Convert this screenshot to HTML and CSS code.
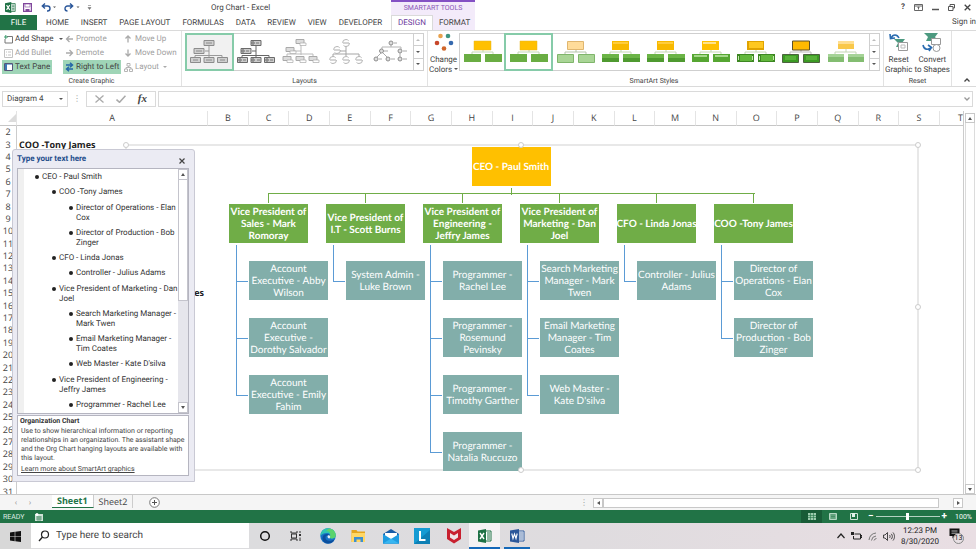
FILE: index.html
```html
<!DOCTYPE html>
<html lang="en">
<head>
<meta charset="utf-8">
<title>Org Chart - Excel</title>
<link rel="stylesheet" href="styles.css">
</head>
<body>
<svg class="defs" width="0" height="0" aria-hidden="true">
  <defs>
    <symbol id="excel" viewBox="0 0 14 14"><path d="M7 2h6v10H7z" fill="#fff" stroke="#217346"/><path d="M9 4h3M9 6h3M9 8h3M9 10h3" stroke="#217346"/><path d="M0 1.500 8 0v14L0 12.500z" fill="#1e7145"/><path d="m2 4 4 6M6 4l-4 6" stroke="#fff" stroke-width="1.400"/></symbol>
    <symbol id="s-flat" viewBox="0 0 40 24"><path d="M9 14v-2h21v2M20 9v3" fill="none" stroke="#c4d6b4"/><path d="M11 1h17v9H11z" fill="#ffc000" stroke="#e6b422" stroke-width=".5"/><path d="M1 14h17v8H1zM22 14h17v8H22z" fill="#6aad43"/></symbol>
    <symbol id="s-pale" viewBox="0 0 40 24"><path d="M9 14v-2h21v2M20 9v3" fill="none" stroke="#b5c4ab"/><path d="M11.500 1.500h16v8h-16z" fill="#ffdc9a" stroke="#e0b66f"/><path d="M1.500 14.500h16v8h-16zM22.500 14.500h16v8h-16z" fill="#a9d596" stroke="#7fb56b"/></symbol>
    <symbol id="s-grad" viewBox="0 0 40 24"><path d="M9 14v-2h21v2M20 9v3" fill="none" stroke="#c4d6b4"/><path d="M11 1h17v9H11z" fill="#f8b900"/><path d="M12 2h15v2H12z" fill="#ffcd3c"/><path d="M1 14h17v8H1zM22 14h17v8H22z" fill="#4f9a30"/><path d="M1 14h17v4H1zM22 14h17v4H22z" fill="#6bb446"/></symbol>
    <symbol id="s-gloss" viewBox="0 0 40 24"><path d="M9 14v-2h21v2M20 9v3" fill="none" stroke="#c4d6b4"/><path d="M11 1h17v9H11z" fill="#ffc000"/><path d="M12 2h13v2H12z" fill="#ffe38a"/><path d="M1 14h17v8H1zM22 14h17v8H22z" fill="#56a632"/><path d="M3 15h13v2H3zM24 15h13v2H24z" fill="#a5d88b"/></symbol>
    <symbol id="s-inset" viewBox="0 0 40 24"><path d="M9 14v-2h21v2M20 9v3" fill="none" stroke="#c4d6b4"/><path d="M11 1h17v9H11z" fill="#e0a300"/><path d="M13 2h14v6H13z" fill="#ffc81f"/><path d="M1 14h17v8H1zM22 14h17v8H22z" fill="#3d8722"/><path d="M4 15h12v6H4zM25 15h12v6H25z" fill="#62b73c"/><path d="M2 16h1v4H2zM16 16h1v4h-1zM23 16h1v4h-1zM37 16h1v4h-1z" fill="#c5eaae"/></symbol>
    <symbol id="s-frame" viewBox="0 0 40 24"><path d="M9 14v-2h21v2M20 9v3" fill="none" stroke="#bbb"/><path d="M11.500 1h17v9h-17z" fill="#ffb900" stroke="#5e5128"/><path d="M1.500 14.500h16v8h-16zM22.500 14.500h16v8h-16z" fill="#3c9b24" stroke="#4d6340"/><path d="M4 16h11v4H4zM25 16h11v4H25z" fill="#58b13a"/></symbol>
    <symbol id="s-soft" viewBox="0 0 40 24"><path d="M9 14v-2h21v2M20 9v3" fill="none" stroke="#c4d6b4"/><path d="M12 1h16v8H12z" fill="#f9c84a"/><path d="M12 1h16v3H12z" fill="#ffdf91"/><path d="M2 14h16v8H2zM22 14h16v8H22z" fill="#83bd71"/><path d="M2 14h16v3H2zM22 14h16v3H22z" fill="#a5d397"/></symbol>
  </defs>
</svg>

<header class="top">
  <div class="top-left">
    <div class="titlebar">
      <svg width="11" height="11"><use href="#excel"/></svg>
      <button aria-label="Save"><svg width="9" height="9" viewBox="0 0 9 9"><path d="M.6.600h7.800v7.800H.6z" fill="#fff" stroke="#80479c" stroke-width="1.200"/><path d="M2 1h5v3H2z" fill="#fff" stroke="#80479c" stroke-width=".6"/><path d="M2.500 6h4v2.500h-4z" fill="#80479c"/></svg></button>
      <button class="undo" aria-label="Undo"><svg width="16" height="9" viewBox="0 0 16 9"><path d="M1.500 3h5a2.500 2.500 0 0 1 0 5H6M4 .5 1.300 3 4 5.500" fill="none" stroke="#2b579a" stroke-width="1.400"/><path d="M12 3.500h3l-1.500 1.500z" fill="#555"/></svg></button>
      <button aria-label="Redo"><svg width="16" height="9" viewBox="0 0 16 9"><path d="M8 3H3.500a2.500 2.500 0 0 0 0 5M6 .5 8.700 3 6 5.500" fill="none" stroke="#2b579a" stroke-width="1.400"/><path d="M12.500 3.500h3l-1.500 1.500z" fill="#555"/></svg></button>
      <button aria-label="Customize toolbar"><svg width="5" height="7" viewBox="0 0 5 7"><path d="M1 1.500h3M1 3.500h3l-1.500 2z" fill="#777" stroke="#777" stroke-width=".6"/></svg></button>
      <span class="title">Org Chart - Excel</span>
    </div>
    <nav class="tabs main-tabs">
      <a class="file" href="#">FILE</a><a href="#">HOME</a><a href="#">INSERT</a><a href="#">PAGE LAYOUT</a><a href="#">FORMULAS</a><a href="#">DATA</a><a href="#">REVIEW</a><a href="#">VIEW</a><a href="#">DEVELOPER</a>
    </nav>
  </div>
  <div class="context">
    <div class="context-title">SMARTART TOOLS</div>
    <nav class="tabs"><a class="active" href="#">DESIGN</a><a href="#">FORMAT</a></nav>
  </div>
  <div class="top-right">
    <div class="winctl">
      <button class="help" aria-label="Help">?</button>
      <button aria-label="Ribbon options"><svg width="9" height="7" viewBox="0 0 9 7"><path d="M.5.500h8v6h-8zM1 2h7" fill="none" stroke="#666"/><path d="M4.500 2.500 6 4H5v1.500H4V4H3z" fill="#666"/></svg></button>
      <button aria-label="Minimize"><svg width="7" height="7" viewBox="0 0 7 7"><path d="M0 5.500h7" stroke="#555" stroke-width="1.500"/></svg></button>
      <button aria-label="Restore"><svg width="7" height="7" viewBox="0 0 7 7"><path d="M2 2V.5h4.500V4H5M.5 2.500H5v4H.5z" fill="none" stroke="#555"/></svg></button>
      <button aria-label="Close"><svg width="7" height="7" viewBox="0 0 7 7"><path d="m.7.700 5.600 5.600M6.300.7.700 6.300" stroke="#444" stroke-width="1.300"/></svg></button>
    </div>
    <a class="signin" href="#">Sign in</a>
  </div>
</header>

<section class="ribbon">
  <div class="group create">
    <div class="cmds">
      <div class="col">
        <button><svg width="9" height="9" viewBox="0 0 9 9"><path d="M3 1.500h5.500v6.500H1V4" fill="none" stroke="#777"/><path d="M1.800 0v4M0 2h4" stroke="#3a9a6c"/></svg>Add Shape<i class="caret"></i></button>
        <button class="off"><svg width="9" height="9" viewBox="0 0 9 9"><path d="M.5.500h8v8h-8zM2 3h1M4 3h3M2 6h1M4 6h3" fill="none" stroke="#c2c2c2"/></svg>Add Bullet</button>
        <button class="on"><svg width="9" height="8" viewBox="0 0 9 8"><path d="M.5.500h8v7h-8z" fill="#fff" stroke="#557"/><path d="M1 1h2v6H1z" fill="#3b78b5"/><path d="M3 1h5v1H3z" fill="#8db4d8"/></svg>Text Pane</button>
      </div>
      <div class="col">
        <button class="off"><svg width="9" height="8" viewBox="0 0 9 8"><path d="M8 4H1.500M4.500 1l-3 3 3 3" fill="none" stroke="#aaa" stroke-width="1.300"/></svg>Promote</button>
        <button class="off"><svg width="9" height="8" viewBox="0 0 9 8"><path d="M1 4h6.500M4.500 1l3 3-3 3" fill="none" stroke="#aaa" stroke-width="1.300"/></svg>Demote</button>
        <button class="on"><svg width="9" height="10" viewBox="0 0 9 10"><path d="M1 3h6M5 .7 7.500 3 5 5.300M8 7H2M4 4.700 1.500 7 4 9.300" fill="none" stroke="#2567a8" stroke-width="1.500"/></svg>Right to Left</button>
      </div>
      <div class="col">
        <button class="off"><svg width="9" height="8" viewBox="0 0 9 8"><path d="M4 7.500V1M1.500 3.500 4 1l2.500 2.500" fill="none" stroke="#aaa" stroke-width="1.300"/></svg>Move Up</button>
        <button class="off"><svg width="9" height="8" viewBox="0 0 9 8"><path d="M4 .5V7M1.500 4.500 4 7l2.500-2.500" fill="none" stroke="#aaa" stroke-width="1.300"/></svg>Move Down</button>
        <button class="off"><svg width="9" height="9" viewBox="0 0 9 9"><path d="M3 .5h3v2.500H3zM.5 6h3v2.500h-3zM5.500 6h3v2.500h-3zM4.500 3v1.500M2 6V4.500h5V6" fill="none" stroke="#b5b5b5"/></svg>Layout<i class="caret"></i></button>
      </div>
    </div>
    <div class="label">Create Graphic</div>
  </div>

  <div class="group layouts">
    <div class="gallery">
      <button class="item sel" aria-label="Organization Chart"><svg width="38" height="26" viewBox="0 0 38 26"><path d="M19 7v12M15 12h4M5 19v-2.500h27V19" fill="none" stroke="#999"/><path d="M14 1.500h10v5H14zM4 9.500h10v5H4zM.5 18.500h10v5H.5zM14 18.500h10v5H14zM27.500 18.500h10v5h-10z" fill="#cfcfcf" stroke="#8c8c8c"/><path d="M16 4h6M6 12h6M3 21h5M16 21h6M30 21h5" stroke="#8c8c8c"/></svg></button>
      <button class="item" aria-label="Picture Organization Chart"><svg width="38" height="26" viewBox="0 0 38 26"><path d="M19 7v12M15 12h4M5 19v-2.500h27V19" fill="none" stroke="#666"/><path d="M14 1.500h10v5H14zM4 9.500h10v5H4zM.5 18.500h10v5H.5zM14 18.500h10v5H14zM27.500 18.500h10v5h-10z" fill="#ccc" stroke="#6b6b6b"/><path d="M15 3h2v2h-2zM5 11h2v2H5zM2 20h2v2H2zM15 20h2v2h-2zM29 20h2v2h-2z" fill="#fff" stroke="#666"/><path d="M19 4h3M9 12h3M6 21h3M20 21h3M33 21h3" stroke="#777"/></svg></button>
      <button class="item" aria-label="Name and Title"><svg width="38" height="26" viewBox="0 0 38 26"><path d="M19 6v10M10 12h9M5 17v-2h26v2" fill="none" stroke="#bbb"/><path d="M14 .5h8v4h-8zM4 8.500h8v4H4zM1 17.500h8v4H1zM14 17.500h8v4h-8zM27 17.500h8v4h-8z" fill="#ddd" stroke="#aaa"/><path d="M18 4h6v2.500h-6zM8 12h6v2.500H8zM5 21h6v2.500H5zM18 21h6v2.500h-6zM31 21h6v2.500h-6z" fill="#fff" stroke="#aaa" stroke-width=".7"/></svg></button>
      <button class="item" aria-label="Half Circle Organization Chart"><svg width="38" height="26" viewBox="0 0 38 26"><path d="M19 7v8M13 12h6M6 18v-3h26v3M19 15v2" fill="none" stroke="#a5a5a5"/><g fill="none" stroke="#b5b5b5"><circle cx="19" cy="4" r="3.500" stroke-dasharray="8 3"/><circle cx="10" cy="11" r="3.500" stroke-dasharray="8 3"/><circle cx="6" cy="21" r="3.500" stroke-dasharray="8 3"/><circle cx="19" cy="21" r="3.500" stroke-dasharray="8 3"/><circle cx="32" cy="21" r="3.500" stroke-dasharray="8 3"/></g><path d="M16 4h6M7 11h6M3 21h6M16 21h6M29 21h6" stroke="#aaa"/></svg></button>
      <button class="item" aria-label="Circle Picture Hierarchy"><svg width="38" height="26" viewBox="0 0 38 26"><path d="M19 6v2M10 10V8h19v2" fill="none" stroke="#b5b5b5"/><g fill="#ddd" stroke="#8e8e8e"><circle cx="19" cy="4" r="2"/><circle cx="9.500" cy="12" r="2"/><circle cx="28" cy="12" r="2"/><circle cx="4" cy="20" r="2"/><circle cx="16" cy="20" r="2"/><circle cx="28" cy="20" r="2"/></g><path d="M22 4h3M12 12h4M31 12h4M7 20h3M19 20h4M31 20h4M9 14l-4 4M11 14l4 4M28 14v4" stroke="#aaa"/></svg></button>
      <div class="spin"><button aria-label="Up"><i class="tri up dim"></i></button><button aria-label="Down"><i class="tri"></i></button><button aria-label="More"><i class="tri more"></i></button></div>
    </div>
    <div class="label">Layouts</div>
  </div>

  <div class="group styles">
    <div class="cmds">
      <button class="big"><svg width="20" height="19" viewBox="0 0 20 19"><circle cx="6.500" cy="3" r="2.300" fill="#e8a14d"/><circle cx="14" cy="3" r="2.300" fill="#3f9480"/><circle cx="3" cy="10" r="2.300" fill="#c8472b"/><circle cx="17" cy="10" r="2.300" fill="#3569ae"/><circle cx="10" cy="15.500" r="2.300" fill="#d0662b"/></svg><span>Change<br>Colors<i class="caret"></i></span></button>
      <div class="gallery">
        <button class="item" aria-label="Simple Fill"><svg width="40" height="24"><use href="#s-flat"/></svg></button>
        <button class="item sel" aria-label="White Outline"><svg width="40" height="24"><use href="#s-flat"/></svg></button>
        <button class="item" aria-label="Subtle Effect"><svg width="40" height="24"><use href="#s-pale"/></svg></button>
        <button class="item" aria-label="Moderate Effect"><svg width="40" height="24"><use href="#s-grad"/></svg></button>
        <button class="item" aria-label="Intense Effect"><svg width="40" height="24"><use href="#s-grad"/></svg></button>
        <button class="item" aria-label="Polished"><svg width="40" height="24"><use href="#s-gloss"/></svg></button>
        <button class="item" aria-label="Inset"><svg width="40" height="24"><use href="#s-inset"/></svg></button>
        <button class="item" aria-label="Cartoon"><svg width="40" height="24"><use href="#s-frame"/></svg></button>
        <button class="item" aria-label="Powder"><svg width="40" height="24"><use href="#s-soft"/></svg></button>
        <div class="spin"><button aria-label="Up"><i class="tri up dim"></i></button><button aria-label="Down"><i class="tri"></i></button><button aria-label="More"><i class="tri more"></i></button></div>
      </div>
    </div>
    <div class="label">SmartArt Styles</div>
  </div>

  <div class="group reset">
    <div class="cmds">
      <button class="big"><svg width="20" height="19" viewBox="0 0 20 19"><path d="M5 6h11l-3 4 3 4H7l2-4z" fill="#4d9a80"/><path d="M9.500 9.500h9v8h-9z" fill="#fff" stroke="#999"/><path d="M12 12h4v3h-4z" fill="#fff" stroke="#bbb"/><path d="M10 5C8 1 4 1 2 5M1 1l.5 4.500L6 5" fill="none" stroke="#2b6cb0" stroke-width="1.600"/></svg><span>Reset<br>Graphic</span></button>
      <button class="big"><svg width="20" height="19" viewBox="0 0 20 19"><path d="M2 0h14l-3 4 3 4H4l2-4z" fill="#4d9a80"/><path d="M9.500 5.500h9v6h-9z" fill="#fff" stroke="#999"/><circle cx="14.500" cy="15" r="3.500" fill="#fff" stroke="#999"/><path d="M1 12c1 5 5 5 8 3M6 12l3.500 2.500L7 18" fill="none" stroke="#2b6cb0" stroke-width="1.600"/></svg><span>Convert<br>to Shapes</span></button>
    </div>
    <div class="label">Reset</div>
  </div>
  <button class="collapse" aria-label="Collapse ribbon"><svg width="6" height="4" viewBox="0 0 6 4"><path d="m.5 3.500 2.500-2.500 2.500 2.500" fill="none" stroke="#444" stroke-width="1.300"/></svg></button>
</section>

<div class="formula">
  <button class="namebox">Diagram 4<i class="caret"></i></button>
  <span class="grip">&#8942;</span>
  <div class="fx">
    <button aria-label="Cancel"><svg width="9" height="8" viewBox="0 0 9 8"><path d="m.5.500 8 7M8.500.500l-8 7" stroke="#aaa" stroke-width="1.300"/></svg></button>
    <button aria-label="Enter"><svg width="10" height="8" viewBox="0 0 10 8"><path d="m.5 4.500 3 2.800L9.500.700" fill="none" stroke="#aaa" stroke-width="1.600"/></svg></button>
    <button class="fn" aria-label="Insert function">fx</button>
  </div>
  <div class="fbox"><input type="text" aria-label="Formula bar"><svg width="6" height="4" viewBox="0 0 6 4"><path d="m.5.500 2.500 2.500L5.500.500" fill="none" stroke="#999" stroke-width="1.300"/></svg></div>
</div>

<main class="work">
  <div class="sheet">
    <table>
      <colgroup><col class="c-row"><col class="c-a"><col span="18"><col class="c-t"></colgroup>
      <thead><tr><th class="corner"><svg width="8" height="8" viewBox="0 0 8 8"><path d="M8 0v8H0z" fill="#dcdcdc"/></svg></th><th>A</th><th>B</th><th>C</th><th>D</th><th>E</th><th>F</th><th>G</th><th>H</th><th>I</th><th>J</th><th>K</th><th>L</th><th>M</th><th>N</th><th>O</th><th>P</th><th>Q</th><th>R</th><th>S</th><th class="t">T</th></tr></thead>
      <tbody>
        <tr><th>2</th><td></td></tr><tr><th>3</th><td>COO -Tony James</td></tr><tr><th>4</th><td></td></tr><tr><th>5</th><td></td></tr><tr><th>6</th><td></td></tr><tr><th>7</th><td></td></tr><tr><th>8</th><td></td></tr><tr><th>9</th><td></td></tr><tr><th>10</th><td></td></tr><tr><th>11</th><td></td></tr><tr><th>12</th><td></td></tr><tr><th>13</th><td></td></tr><tr><th>14</th><td></td></tr><tr><th>15</th><td class="end">es</td></tr><tr><th>16</th><td></td></tr><tr><th>17</th><td></td></tr><tr><th>18</th><td></td></tr><tr><th>19</th><td></td></tr><tr><th>20</th><td></td></tr><tr><th>21</th><td></td></tr><tr><th>22</th><td></td></tr><tr><th>23</th><td></td></tr><tr><th>24</th><td></td></tr><tr><th>25</th><td></td></tr><tr><th>26</th><td></td></tr><tr><th>27</th><td></td></tr><tr><th>28</th><td></td></tr><tr><th>29</th><td></td></tr><tr><th>30</th><td></td></tr><tr><th>31</th><td></td></tr>
      </tbody>
    </table>

    <div class="frame">
      <div class="chart">
        <div class="node ceo">CEO - Paul Smith</div>
        <div class="branches">
          <div class="branch"><div class="node vp">Vice President of<br>Sales - Mark<br>Romoray</div>
            <div class="kids"><div class="node">Account<br>Executive - Abby<br>Wilson</div><div class="node">Account<br>Executive -<br>Dorothy Salvador</div><div class="node">Account<br>Executive - Emily<br>Fahim</div></div></div>
          <div class="branch"><div class="node vp">Vice President of<br>I.T - Scott Burns</div>
            <div class="kids"><div class="node">System Admin -<br>Luke Brown</div></div></div>
          <div class="branch"><div class="node vp">Vice President of<br>Engineering -<br>Jeffry James</div>
            <div class="kids"><div class="node">Programmer -<br>Rachel Lee</div><div class="node">Programmer -<br>Rosemund<br>Pevinsky</div><div class="node">Programmer -<br>Timothy Garther</div><div class="node">Programmer -<br>Natalia Ruccuzo</div></div></div>
          <div class="branch"><div class="node vp">Vice President of<br>Marketing - Dan<br>Joel</div>
            <div class="kids"><div class="node">Search Marketing<br>Manager - Mark<br>Twen</div><div class="node">Email Marketing<br>Manager - Tim<br>Coates</div><div class="node">Web Master -<br>Kate D'silva</div></div></div>
          <div class="branch"><div class="node vp">CFO - Linda Jonas</div>
            <div class="kids"><div class="node">Controller - Julius<br>Adams</div></div></div>
          <div class="branch"><div class="node vp">COO -Tony James</div>
            <div class="kids"><div class="node">Director of<br>Operations - Elan<br>Cox</div><div class="node">Director of<br>Production - Bob<br>Zinger</div></div></div>
        </div>
      </div>
      <i class="handle tl"></i><i class="handle tm"></i><i class="handle tr"></i><i class="handle mr"></i><i class="handle bm"></i><i class="handle br"></i>
    </div>

    <aside class="pane">
      <div class="pane-head"><strong>Type your text here</strong><button aria-label="Close"><svg width="6" height="6" viewBox="0 0 6 6"><path d="m.5.500 5 5M5.500.500l-5 5" stroke="#444" stroke-width="1.200"/></svg></button></div>
      <div class="pane-list">
        <ul>
          <li>CEO - Paul Smith</li>
          <li class="l2">COO -Tony James</li>
          <li class="l3">Director of Operations - Elan<br>Cox</li>
          <li class="l3">Director of Production - Bob<br>Zinger</li>
          <li class="l2">CFO - Linda Jonas</li>
          <li class="l3">Controller - Julius Adams</li>
          <li class="l2">Vice President of Marketing - Dan<br>Joel</li>
          <li class="l3">Search Marketing Manager -<br>Mark Twen</li>
          <li class="l3">Email Marketing Manager -<br>Tim Coates</li>
          <li class="l3">Web Master - Kate D'silva</li>
          <li class="l2">Vice President of Engineering -<br>Jeffry James</li>
          <li class="l3">Programmer - Rachel Lee</li>
        </ul>
        <div class="pane-scroll"><button aria-label="Scroll up"><i class="tri up"></i></button><span class="thumb"></span><button aria-label="Scroll down"><i class="tri"></i></button></div>
      </div>
      <div class="pane-info">
        <strong>Organization Chart</strong>
        <p>Use to show hierarchical information or reporting<br>relationships in an organization. The assistant shape<br>and the Org Chart hanging layouts are available with<br>this layout.</p>
        <a href="#">Learn more about SmartArt graphics</a>
      </div>
    </aside>
  </div>
  <div class="vscroll"><button aria-label="Scroll up"><i class="tri up"></i></button><span class="vtrack"></span><button aria-label="Scroll down"><i class="tri"></i></button></div>
</main>

<div class="sheetbar">
  <button class="nav" aria-label="Previous sheet">&#8249;</button><button class="nav" aria-label="Next sheet">&#8250;</button>
  <button class="stab active">Sheet1</button><button class="stab">Sheet2</button>
  <button class="plus" aria-label="New sheet"><svg width="11" height="11" viewBox="0 0 11 11"><circle cx="5.500" cy="5.500" r="4.800" fill="#fff" stroke="#777"/><path d="M5.500 3v5M3 5.500h5" stroke="#555"/></svg></button>
  <div class="hscroll"><span class="grip">&#8942;</span><button aria-label="Scroll left"><i class="tri left"></i></button><span class="track"></span><button aria-label="Scroll right"><i class="tri right"></i></button></div>
</div>

<div class="status">
  <span class="ready">READY</span>
  <svg width="8" height="8" viewBox="0 0 8 8"><path d="M0 1h8v7H0z" fill="#cfe3d7"/><path d="M1 4h6M1 6h6M3 3v5M5 3v5" stroke="#217346" stroke-width=".6"/><circle cx="2" cy="1.500" r="1.500" fill="#fff"/></svg>
  <div class="views">
    <button class="cur" aria-label="Normal view"><svg width="8" height="7" viewBox="0 0 8 7"><path d="M0 0h8v7H0z" fill="#9dcbae"/><path d="M0 2.500h8M0 4.500h8M2.500 0v7M5.500 0v7" stroke="#217346" stroke-width=".6"/></svg></button>
    <button aria-label="Page layout view"><svg width="8" height="7" viewBox="0 0 8 7"><path d="M.5.500h7v6h-7z" fill="#7fb595" stroke="#b5d6c2"/><path d="M2 2h4M2 3.500h4M2 5h4" stroke="#217346" stroke-width=".6"/></svg></button>
    <button aria-label="Page break view"><svg width="8" height="7" viewBox="0 0 8 7"><path d="M.5.500h7v6h-7z" fill="none" stroke="#cfe3d7"/><path d="M2 0h3v4H2z" fill="#e5f2ea"/></svg></button>
  </div>
  <span class="zm">&#8722;</span><input class="zoom" type="range" min="0" max="100" value="50" aria-label="Zoom"><span class="zm">+</span><span class="pct">100%</span>
</div>

<footer class="taskbar">
  <button class="start" aria-label="Start"><svg width="11" height="11" viewBox="0 0 11 11"><path d="M0 1.500 4.700.800v4.400H0zM5.300.700 11 0v5.200H5.300zM0 5.800h4.700v4.400L0 9.500zM5.300 5.800H11V11l-5.700-.8z" fill="#111"/></svg></button>
  <label class="search"><svg width="12" height="12" viewBox="0 0 12 12"><circle cx="7" cy="4.500" r="3.500" fill="none" stroke="#222" stroke-width="1.200"/><path d="M4.500 7 1 11" stroke="#222" stroke-width="1.300"/></svg><input type="text" placeholder="Type here to search" aria-label="Type here to search"></label>
  <nav class="apps">
    <button aria-label="Cortana"><svg width="12" height="12" viewBox="0 0 12 12"><circle cx="6" cy="6" r="4.300" fill="none" stroke="#111" stroke-width="1.500"/></svg></button>
    <button aria-label="Task View"><svg width="12" height="12" viewBox="0 0 12 12"><path d="M1 1v2h6V1M1 11V9h6v2M1.500 4h5v4h-5zM10 1v2M10 7.500V11" fill="none" stroke="#333"/><path d="M9 4h2v2H9z" fill="#333"/></svg></button>
    <button aria-label="Edge"><svg width="16" height="16" viewBox="0 0 16 16"><circle cx="8" cy="8" r="7.700" fill="#1673c6"/><path d="M.5 7C1 3 4 .3 8 .3c5 0 8 3.700 7.700 7.200-.2 2-2 3.200-4.200 3-1.500-.1-2-.8-1.500-1.700.8-1.600-.5-3.800-3-3.800C4 5 1.500 6 .5 8z" fill="#2fc4b2"/><path d="M9 .4c4 .3 7 3.600 6.700 7.100-.2 2-2 3.200-4.200 3-1.500-.1-2-.8-1.500-1.700C11 6 10 3 6 3z" fill="#5bd36c"/><path d="M10 9C9 7 6 7 5.500 9c-.4 2.500 2 4.500 6 3.500l3-1c-1 2.500-4 4.500-7 4C3 15 1.500 11 3 8c1-2 5-3 7-.5z" fill="#0c4f9e"/><path d="M7.500 8.500c0-1.500 2-1.800 2.600-.5.200.6-.6 1.400 0 2.100-1.500.9-2.600-.4-2.600-1.600z" fill="#e3eff0"/></svg></button>
    <button aria-label="File Explorer"><svg width="15" height="14" viewBox="0 0 15 14"><path d="M.5 1h5l1 1.500H14V13H.5z" fill="#e5a51e"/><path d="M.5 4H14v9H.5z" fill="#ffd765"/><path d="M3 8h9v5H9.500v-2.500h-4V13H3z" fill="#3d8fd1"/></svg></button>
    <button aria-label="Mail"><svg width="16" height="15" viewBox="0 0 16 15"><path d="m0 5 8-5 8 5v9.500H0z" fill="#175ca8"/><path d="M2 4h12v6H2z" fill="#fff"/><path d="m0 5 8 5 8-5v9.500H0z" fill="#1e9be0"/><path d="m0 14.500 8-5 8 5z" fill="#38b6f1"/></svg></button>
    <button aria-label="L"><svg width="16" height="16" viewBox="0 0 16 16"><path d="M0 0h16v16H0z" fill="#159bd3"/><path d="M0 16 16 2v14z" fill="#0e80b5"/><path d="M6 3v9h5.500" fill="none" stroke="#fff" stroke-width="2"/></svg></button>
    <button aria-label="McAfee"><svg width="14" height="16" viewBox="0 0 14 16"><path d="m0 0 7 4 7-4v11l-7 4.500L0 11z" fill="#c8202f"/><path d="m3 5 4 2.500L11 5v4.500L7 12 3 9.500z" fill="#eee4e6"/></svg></button>
    <button class="run cur" aria-label="Excel"><svg width="14" height="14"><use href="#excel"/></svg></button>
    <button class="run" aria-label="Word"><svg width="15" height="14" viewBox="0 0 15 14"><path d="M7 2h7v10H7z" fill="#fff" stroke="#2b579a"/><path d="M9 4h4M9 6h4M9 8h4M9 10h4" stroke="#2b579a" stroke-width=".8"/><path d="M0 1.500 9 0v14l-9-1.500z" fill="#2b579a"/><path d="m1.800 4.500 1.200 5 1.500-4.500L6 9.500l1.200-5" fill="none" stroke="#fff" stroke-width="1.100"/></svg></button>
  </nav>
  <div class="tray">
    <svg width="8" height="6" viewBox="0 0 8 6"><path d="m.5 5 3.500-4 3.500 4" fill="none" stroke="#222" stroke-width="1.200"/></svg>
    <svg width="11" height="8" viewBox="0 0 11 8"><path d="M3.500 2h6v5h-7V4M10 3.500h1v2h-1z" fill="none" stroke="#222"/><path d="M0 0h3v3H0z" fill="#222"/></svg>
    <svg width="9" height="9" viewBox="0 0 9 9"><path d="M1 8a8 8 0 0 1 7-7M3.500 8.500A5 5 0 0 1 8 4M6 8.500A3 3 0 0 1 8.500 6.500" fill="none" stroke="#777"/></svg>
    <svg width="12" height="9" viewBox="0 0 12 9"><path d="M.5 3v3H2l2.500 2.500v-8L2 3zM6.500 3c.8 1 .8 2 0 3M8.300 1.800c1.400 1.700 1.400 3.700 0 5.400M10 .5c2 2.500 2 5.500 0 8" fill="none" stroke="#333" stroke-width=".9"/></svg>
    <div class="clock"><span>12:23 PM</span><span>8/30/2020</span></div>
    <button class="note" aria-label="Notifications"><svg width="11" height="11" viewBox="0 0 11 11"><path d="M.5.500h10v7.500H6L3.500 10.500V8h-3z" fill="#111"/><path d="M2.500 3h6M2.500 5.200h6" stroke="#ddd" stroke-width=".8"/></svg><span class="badge">13</span></button>
  </div>
</footer>
</body>
</html>
```
FILE: styles.css
```css
* { box-sizing: border-box; }

:root {
  --ui: Roboto, "Open Sans", sans-serif;
  --doc: Lato, "Open Sans", sans-serif;
  --cells: "Open Sans", "Noto Sans", sans-serif;
  --green: #217346;
  --line: #dadada;
}

html, body { height: 100%; }

body {
  margin: 0;
  display: flex;
  flex-direction: column;
  overflow: hidden;
  background: #fff;
  color: #444;
  font-family: var(--ui);
  font-size: 8px;
  line-height: 10px;
  text-rendering: geometricPrecision;
}

button {
  display: flex;
  align-items: center;
  justify-content: center;
  padding: 0;
  border: 0;
  background: none;
  color: inherit;
  font: inherit;
  text-rendering: inherit;
  white-space: nowrap;
}

a { color: inherit; text-decoration: none; white-space: nowrap; }
svg { display: block; flex: none; }
input { font: inherit; text-rendering: inherit; }
.defs { position: absolute; }

.caret {
  border: 2px solid transparent;
  border-top-color: #555;
  border-bottom: 0;
  margin-left: 4px;
}

.tri {
  border: 2px solid transparent;
  border-top: 3px solid #555;
  border-bottom: 0;
}
.tri.up { border-top: 0; border-bottom: 3px solid #555; }
.tri.left { border: 2px solid transparent; border-right: 3px solid #555; border-left: 0; }
.tri.right { border: 2px solid transparent; border-left: 3px solid #555; border-right: 0; }
.tri.dim { border-bottom-color: #bbb; }
.tri.more { box-shadow: 0 -2px 0 -1px #777; }
.spin .tri { border-top-width: 2px; }
.spin .tri.up { border-top-width: 0; border-bottom-width: 2px; }

/* Title bar and tabs */
.top { display: flex; flex: none; height: 30px; }
.top-left { display: flex; flex-direction: column; width: 391px; }
.titlebar { display: flex; align-items: center; gap: 7px; height: 15px; padding-left: 5px; }
.titlebar button.undo { margin-left: 2px; }
.title { margin-left: 112px; white-space: nowrap; }
.tabs { display: flex; height: 15px; }
.tabs a { display: flex; flex: none; align-items: center; padding: 0 7px; }
.main-tabs a { padding: 0 6px; }
.tabs .file { justify-content: center; width: 37px; margin-right: 3px; background: var(--green); color: #fff; }
.context { width: 84px; background: #f3ebfa; border-top: 2px solid #8451c4; }
.context-title { height: 13px; line-height: 12px; text-align: center; color: #8a57b8; font-size: 7px; white-space: nowrap; }
.context .active { background: #fff; color: #6c3a9c; border: 1px solid var(--line); border-bottom: 0; }
.context .tabs a { padding: 0 6px; }
.top-right { flex: 1; display: flex; flex-direction: column; align-items: flex-end; }
.winctl { display: flex; align-items: center; gap: 9px; height: 14px; padding-right: 5px; }
.help { font-weight: 700; }
.signin { line-height: 16px; }

/* Ribbon */
.ribbon { display: flex; flex: none; height: 57px; border-top: 1px solid var(--line); border-bottom: 1px solid var(--line); }
.group { display: flex; flex-direction: column; padding: 2px 3px 0; border-right: 1px solid #e2e2e2; }
.group .label { margin-top: auto; text-align: center; font-size: 7px; line-height: 10px; }
.group .cmds { display: flex; }
.create { width: 182px; padding: 1px 0 0 2px; }
.create .cmds { display: grid; grid-template-columns: 61px 59px 1fr; }
.col { display: flex; flex-direction: column; align-items: flex-start; }
.col button { gap: 2px; height: 14px; padding: 0 2px; }
.col .on { background: #9fd5b7; }
.col .off { color: #a0a0a0; }
.col .off .caret { border-top-color: #aaa; margin-left: 2px; }
.layouts { width: 246px; }
.gallery { display: flex; flex: 1; height: 38px; border: 1px solid #cfcfcf; }
.layouts .gallery { flex: none; }
.item { flex: 1; min-width: 0; }
.item.sel { border: 2px solid #86cba9; margin: -1px 0 -1px -1px; background: #fff; }
.layouts .sel { background: #f1f1f1; }
.spin { display: flex; flex-direction: column; width: 10px; border-left: 1px solid #cfcfcf; }
.spin button { flex: 1; }
.spin button + button { border-top: 1px solid #cfcfcf; }
.styles { flex: 1; padding-left: 0; }
.big { flex-direction: column; justify-content: flex-start; gap: 3px; line-height: 10px; }
.big .caret { display: inline-block; margin-left: 2px; vertical-align: 2px; }
.styles .big { width: 31px; }
.reset { width: 68px; padding-left: 1px; padding-right: 1px; }
.reset .cmds { justify-content: space-between; }
.collapse { width: 24px; align-self: flex-end; height: 12px; padding-left: 6px; }

/* Formula bar */
.formula { display: flex; flex: none; align-items: center; height: 24px; padding: 0 3px 0 2px; }
.namebox { justify-content: space-between; width: 66px; height: 16px; padding: 0 4px; border: 1px solid var(--line); }
.grip { width: 18px; text-align: center; color: #999; }
.fx { display: flex; justify-content: space-around; width: 70px; height: 16px; padding: 0 2px; border: 1px solid var(--line); }
.fn { font: italic 700 11px "Liberation Serif", serif; }
.fbox { display: flex; flex: 1; align-items: center; height: 16px; margin-left: 2px; padding-right: 2px; border: 1px solid var(--line); }
.fbox input { flex: 1; min-width: 0; height: 12px; border: 0; }

/* Worksheet */
.work { display: flex; flex: 1; min-height: 0; border-bottom: 1px solid #c8c8c8; }
.sheet { position: relative; flex: 1; min-width: 0; overflow: hidden; border-right: 1px solid #ccc; }
table { width: 100%; height: calc(100% + 4px); table-layout: fixed; border-collapse: separate; border-spacing: 0; font-family: var(--cells); }
th, td { padding: 0; }
.c-row { width: 17px; }
.c-a { width: 191px; }
.c-t { width: 23px; }
thead th { height: 15px; font-weight: 400; font-size: 9px; line-height: 14px; border-right: 1px solid #e4e4e4; border-bottom: 1px solid #c6c6c6; }
thead .corner svg { margin: 0 0 0 8px; }
thead .t { text-align: right; border-right: 0; }
tbody th { font-weight: 400; font-size: 9px; line-height: 12px; border-right: 1px solid #ccc; }
tbody td { padding-left: 2px; font-weight: 700; color: #222; font-size: 9px; line-height: 12px; white-space: nowrap; }
tbody .end { text-align: right; padding-right: 4px; }

/* SmartArt canvas */
.frame { position: absolute; left: 125px; top: 33px; width: 794px; height: 327px; border: 2px solid #e8e8e8; }
.handle { position: absolute; width: 6px; height: 6px; border: 1px solid #ccc; border-radius: 50%; background: #fff; }
.tl { left: -4px; top: -4px; }
.tm { left: 391px; top: -4px; }
.tr { right: -4px; top: -4px; }
.mr { right: -4px; top: 158px; }
.bm { left: 391px; bottom: -4px; }
.br { right: -4px; bottom: -4px; }
.chart { width: 564px; margin-left: 102px; padding-top: 1px; font-family: var(--doc); font-size: 10px; line-height: 12px; color: #fff; text-align: center; }
.node { position: relative; display: flex; align-items: center; justify-content: center; width: 79px; height: 39px; background: #82aeaa; white-space: nowrap; }
.ceo { margin: 0 auto; background: #ffc000; font-weight: 700; }
.ceo::after { content: ""; position: absolute; top: 41px; left: 39px; width: 1px; height: 7px; background: #70ad47; }
.branches { display: flex; gap: 18px; margin-top: 18px; }
.branch { width: 79px; }
.vp { background: #70ad47; font-weight: 700; }
.vp::before { content: ""; position: absolute; top: -11px; left: 39px; width: 97px; height: 9px; border-top: 1px solid #70ad47; border-left: 1px solid #70ad47; }
.branch:last-child .vp::before { width: 1px; }
.kids { display: flex; flex-direction: column; gap: 18px; padding: 18px 0 0 20px; }
.kids .node::before { content: ""; position: absolute; left: -13px; top: -38px; width: 11px; height: 58px; border-left: 1px solid #5b9bd5; border-bottom: 1px solid #5b9bd5; }
.kids .node:first-child::before { top: -16px; height: 36px; }

/* Text pane */
.pane { position: absolute; left: 12px; top: 38px; display: flex; flex-direction: column; width: 183px; height: 333px; padding: 0 5px 5px 4px; background: #ebebf3; border: 1px solid #c9c9d4; border-radius: 3px 3px 0 0; }
.pane-head { display: flex; justify-content: space-between; height: 18px; line-height: 17px; color: #1f4e8c; }
.pane-head button { padding: 4px 4px 0 0; }
.pane-list { display: flex; flex: 1; min-height: 0; border: 1px solid #b5b5c0; background: #fff; color: #333; }
.pane-list ul { display: flex; flex: 1; flex-direction: column; justify-content: space-between; margin: 0; padding: 3px 0 3px 18px; border-left: 6px solid #f0f0f0; list-style: none; }
.pane-list li { position: relative; white-space: nowrap; }
.pane-list li::before { content: ""; position: absolute; left: -7px; top: 3px; width: 4px; height: 4px; border-radius: 50%; background: #222; }
.l2 { margin-left: 17px; }
.l3 { margin-left: 34px; }
.pane-scroll { display: flex; flex-direction: column; justify-content: space-between; width: 11px; background: #e6e6ec; }
.pane-scroll button { height: 11px; border: 1px solid #c4c4cc; background: #fff; }
.thumb { flex: none; height: 121px; margin-bottom: auto; background: #fff; border: 1px solid #c4c4cc; border-top: 0; }
.pane-info { margin-top: 1px; height: 61px; padding: 1px 2px; border: 1px solid #b5b5c0; background: #fff; font-size: 7px; line-height: 9px; white-space: nowrap; }
.pane-info strong { display: block; color: #333; }
.pane-info p { margin: 1px 0 2px 1px; }
.pane-info a { margin-left: 1px; text-decoration: underline; }

/* Scroll bars */
.vscroll { display: flex; flex-direction: column; align-items: center; width: 12px; padding: 2px 0 0; }
.vscroll button, .hscroll button { width: 10px; height: 10px; border: 1px solid #c8c8c8; background: #fff; }
.vtrack { flex: 1; width: 10px; border: 1px solid #dcdcdc; border-width: 0 1px; }

/* Sheet tabs */
.sheetbar { display: flex; flex: none; height: 15px; background: #f5f5f5; }
.nav { width: 14px; color: #999; }
.nav:first-child { margin-left: 9px; }
.stab { height: 13px; padding: 0 5px; font-family: var(--cells); font-size: 9px; border-right: 1px solid #ccc; }
.stab.active { margin-left: 15px; background: #fff; color: var(--green); font-weight: 700; border-bottom: 1px solid var(--green); }
.plus { margin-left: 16px; }
.hscroll { display: flex; align-items: center; width: 401px; margin-left: auto; padding-right: 13px; }
.track { flex: 1; height: 10px; margin-right: 14px; border: 1px solid #c8c8c8; background: #fff; }

/* Status bar */
.status { display: flex; flex: none; align-items: center; height: 13px; padding: 0 4px 0 3px; background: var(--green); color: #fff; font-size: 7px; }
.ready { margin-right: 10px; color: #dcebe2; }
.views { display: flex; height: 13px; margin-left: auto; margin-right: 4px; }
.views button { width: 21px; }
.views .cur { background: #185c37; }
.zm { font-size: 10px; font-weight: 700; }
.zoom { width: 64px; height: 8px; margin: 0 2px; appearance: none; background: linear-gradient(#b5d2c1, #b5d2c1) center / 100% 1px no-repeat; }
.zoom::-webkit-slider-thumb { appearance: none; width: 3px; height: 7px; background: #fff; }
.pct { margin-left: 8px; }

/* Taskbar */
.taskbar { display: flex; flex: none; height: 26px; background: linear-gradient(90deg, #dcdcde 25%, #dfdcdf 60%, #e9dee3); }
.start { width: 31px; background: #d8d8d8; }
.search { display: flex; align-items: center; gap: 6px; width: 218px; padding-left: 7px; margin-bottom: 1px; background: #fff; color: #333; font-size: 10px; }
.search input { flex: 1; min-width: 0; padding: 0; border: 0; background: none; }
.search input::placeholder { color: #444; opacity: 1; }
.apps { display: flex; }
.apps button { width: 31px; }
.apps button:nth-child(2n) { margin-right: 1px; }
.apps .run { border-bottom: 2px solid #1468b8; padding-top: 2px; }
.apps .run.cur { background: #f4f2f3; }
.apps .run + .run { width: 26px; margin-left: 3px; }
.tray { display: flex; align-items: center; gap: 6px; margin-left: auto; padding-right: 11px; color: #222; }
.clock { display: flex; flex-direction: column; align-items: center; line-height: 11px; }
.note { position: relative; width: 16px; height: 16px; margin-left: 4px; align-items: flex-start; justify-content: flex-start; }
.badge { position: absolute; left: 4px; top: 5px; width: 11px; height: 11px; border: 1px solid #888; border-radius: 50%; background: #e8e0e4; font-size: 7px; line-height: 9px; text-align: center; }
```
